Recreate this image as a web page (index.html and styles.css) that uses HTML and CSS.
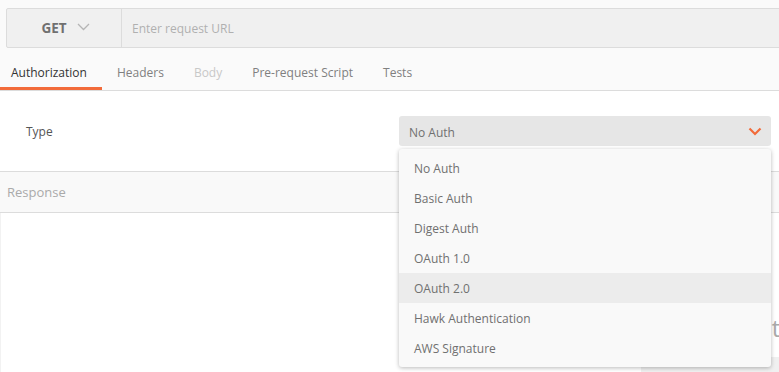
FILE: index.html
```html
<!DOCTYPE html>
<html>
<head>
<meta charset="utf-8">
<link rel="stylesheet" href="styles.css">
</head>
<body>
<div class="page">
  <div class="top">
    <div class="urlbar">
      <div class="method">
        <span class="method-name">GET</span>
        <svg class="method-caret" width="13" height="8" viewBox="0 0 13 8"><path d="M1 1 L6.5 6.5 L12 1" fill="none" stroke="#b5b5b5" stroke-width="1.3"/></svg>
      </div>
      <div class="url">Enter request URL</div>
    </div>
    <div class="tabs">
      <div class="tab active">Authorization</div>
      <div class="tab">Headers</div>
      <div class="tab disabled">Body</div>
      <div class="tab">Pre-request Script</div>
      <div class="tab">Tests</div>
    </div>
  </div>
  <div class="auth">
    <div class="type-label">Type</div>
    <div class="select-wrap">
      <div class="select">
        <span>No Auth</span>
        <svg class="select-caret" width="14" height="9" viewBox="0 0 14 9"><path d="M1.5 1.5 L7 7 L12.5 1.5" fill="none" stroke="#f26b3a" stroke-width="2.2"/></svg>
      </div>
      <ul class="menu">
        <li>No Auth</li>
        <li>Basic Auth</li>
        <li>Digest Auth</li>
        <li>OAuth 1.0</li>
        <li class="hover">OAuth 2.0</li>
        <li>Hawk Authentication</li>
        <li>AWS Signature</li>
      </ul>
    </div>
  </div>
  <div class="response-head">Response</div>
  <div class="response-body">
    <div class="empty">
      <div class="empty-text">Hit the Send button to get a response.</div>
      <div class="empty-art"></div>
    </div>
  </div>
</div>
</body>
</html>
```

FILE: styles.css
```css
html, body {
  margin: 0;
  padding: 0;
  background: #ffffff;
  overflow: hidden;
}
body {
  font-family: "Open Sans", "Liberation Sans", sans-serif;
  width: 779px;
  height: 372px;
}
.page {
  width: 779px;
  height: 372px;
  overflow: hidden;
  display: flex;
  flex-direction: column;
}
.top {
  background: #fafafa;
  padding-top: 8px;
  border-bottom: 1px solid #dcdcdc;
  flex: none;
}
.urlbar {
  margin-left: 6px;
  width: 800px;
  height: 38px;
  display: flex;
  background: #f0f0f0;
  border: 1px solid #dcdcdc;
  border-radius: 2px 0 0 2px;
}
.method {
  width: 115px;
  flex: none;
  border-right: 1px solid #dcdcdc;
  display: flex;
  align-items: center;
  justify-content: center;
  gap: 10px;
  padding-left: 3px;
  box-sizing: border-box;
}
.method-name {
  font-weight: 700;
  font-size: 13.5px;
  color: #707070;
}
.method-caret {
  margin-top: -2px;
}
.url {
  display: flex;
  align-items: center;
  padding-left: 10px;
  font-size: 12px;
  color: #b0b0b0;
}
.tabs {
  display: flex;
  height: 42px;
}
.tab {
  font-size: 12px;
  color: #808080;
  padding: 7px 15px 0 15px;
  display: flex;
  align-items: center;
  box-sizing: border-box;
}
.tab.active {
  color: #333333;
  padding-left: 11px;
  padding-right: 15px;
  border-bottom: 3px solid #f26b3a;
  padding-top: 10px;
}
.tab.disabled {
  color: #c8c8c8;
}
.auth {
  height: 80px;
  display: flex;
  align-items: flex-start;
  padding-top: 25px;
  box-sizing: border-box;
  flex: none;
}
.type-label {
  width: 373px;
  padding-left: 26px;
  font-size: 12px;
  color: #555555;
  line-height: 32px;
  flex: none;
}
.select-wrap {
  position: relative;
  width: 372px;
  flex: none;
}
.select {
  height: 30px;
  box-sizing: border-box;
  background: #e6e6e6;
  border-radius: 3px;
  display: flex;
  align-items: center;
  justify-content: space-between;
  padding: 2px 9px 0 10px;
  font-size: 12px;
  color: #707070;
}
.select-caret {
  margin-top: -1px;
}
.menu {
  position: absolute;
  top: 33px;
  left: 0;
  width: 372px;
  box-sizing: border-box;
  margin: 0;
  padding: 4px 0;
  list-style: none;
  background: #f9f9f9;
  border-radius: 3px;
  box-shadow: 0 1px 4px rgba(0, 0, 0, 0.28);
  z-index: 10;
}
.menu li {
  height: 30px;
  box-sizing: border-box;
  padding-top: 2px;
  line-height: 28px;
  padding-left: 15px;
  font-size: 12px;
  color: #707070;
}
.menu li.hover {
  background: #ececec;
}
.response-head {
  height: 40px;
  background: #f9f9f9;
  border-top: 1px solid #dcdcdc;
  border-bottom: 1px solid #dcdcdc;
  font-size: 13px;
  color: #aaaaaa;
  padding-left: 7px;
  display: flex;
  align-items: center;
  flex: none;
}
.response-body {
  flex: 1;
  border-left: 1px solid #f2f2f2;
  position: relative;
}
.empty {
  padding-top: 100px;
  padding-left: 747px;
  white-space: nowrap;
}
.empty-text {
  font-size: 24px;
  color: #aaaaaa;
  line-height: 30px;
}
.empty-art {
  margin-left: -107px;
  margin-top: 14px;
  width: 200px;
  height: 40px;
  background: #f0f0f0;
}
```
